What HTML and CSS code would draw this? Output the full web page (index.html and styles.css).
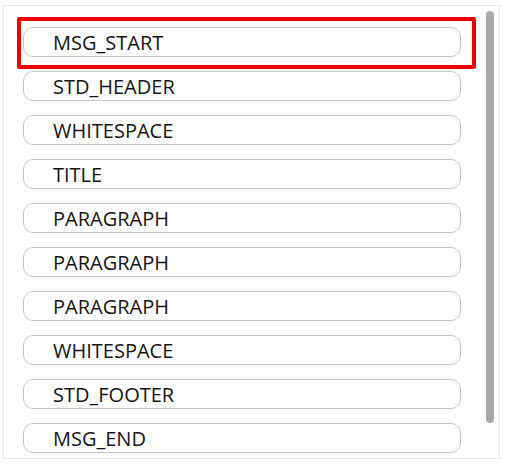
FILE: index.html
```html
<!DOCTYPE html>
<html>
<head>
<meta charset="utf-8">
<link rel="stylesheet" href="styles.css">
</head>
<body>
<div class="panel">
  <div class="list">
    <div class="item">MSG_START</div>
    <div class="item">STD_HEADER</div>
    <div class="item">WHITESPACE</div>
    <div class="item">TITLE</div>
    <div class="item">PARAGRAPH</div>
    <div class="item">PARAGRAPH</div>
    <div class="item">PARAGRAPH</div>
    <div class="item">WHITESPACE</div>
    <div class="item">STD_FOOTER</div>
    <div class="item">MSG_END</div>
    <div class="highlight"></div>
  </div>
  <div class="scrollbar"></div>
</div>
</body>
</html>
```

FILE: styles.css
```css
html, body {
  margin: 0;
  padding: 0;
  background: #ffffff;
}
body {
  font-family: "Open Sans", "Noto Sans", sans-serif;
}
.panel {
  box-sizing: border-box;
  margin: 5px 0 0 3px;
  width: 497px;
  height: 454px;
  border: 1px solid #e8e8e8;
  display: flex;
  overflow: hidden;
}
.list {
  position: relative;
  padding: 21px 0 0 19px;
  display: flex;
  flex-direction: column;
  gap: 14px;
}
.item {
  box-sizing: border-box;
  width: 438px;
  height: 30px;
  flex: none;
  border: 1px solid #c6c6c6;
  border-radius: 10px;
  padding: 2px 0 0 29px;
  font-size: 20px;
  line-height: 26px;
  color: #141414;
}
.highlight {
  position: absolute;
  left: 13px;
  top: 11px;
  width: 459px;
  height: 52px;
  box-sizing: border-box;
  border: 4px solid #f00000;
  border-radius: 2px;
}
.scrollbar {
  margin: 5px 0 0 25px;
  width: 8px;
  height: 412px;
  border-radius: 4px;
  background: #a9a9a9;
  flex: none;
}
```
